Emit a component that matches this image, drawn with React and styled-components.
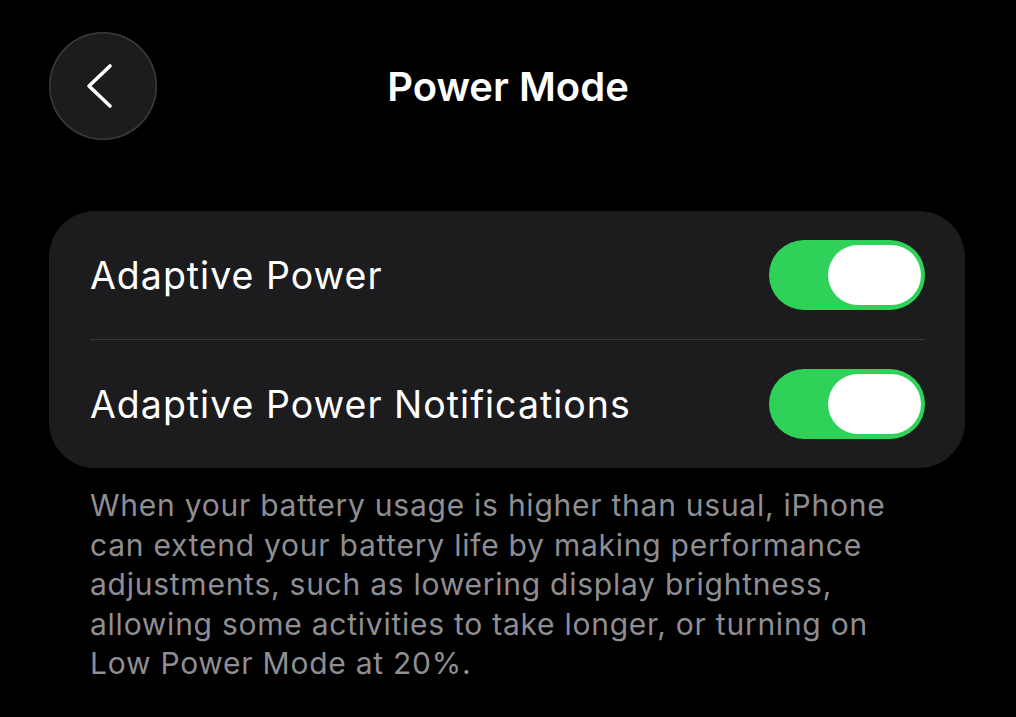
import styled, { createGlobalStyle } from "styled-components";

const Global = createGlobalStyle`
  html, body {
    margin: 0;
    padding: 0;
    background: #000;
  }
  body {
    font-family: Inter, "Noto Sans", sans-serif;
    -webkit-font-smoothing: antialiased;
  }
`;

export default function App() {
  return (
    <Tela>
      <Global />
      <Topo>
        <BotaoVoltar aria-label="Voltar">
          <svg width="30" height="46" viewBox="0 0 30 46" fill="none">
            <path d="M25 3 L4 23 L25 43" stroke="#fff" strokeWidth="3.6" strokeLinecap="round" strokeLinejoin="round" />
          </svg>
        </BotaoVoltar>
        <Titulo>Power Mode</Titulo>
        <Espaco />
      </Topo>

      <Cartao>
        <Linha>
          <Rotulo>Adaptive Power</Rotulo>
          <Chave ligado />
        </Linha>
        <Linha>
          <Rotulo>Adaptive Power Notifications</Rotulo>
          <Chave ligado />
        </Linha>
      </Cartao>

      <Rodape>
        When your battery usage is higher than usual, iPhone<br />
        can extend your battery life by making performance<br />
        adjustments, such as lowering display brightness,<br />
        allowing some activities to take longer, or turning on<br />
        Low Power Mode at 20%.
      </Rodape>
    </Tela>
  );
}

function Chave({ ligado }) {
  return (
    <Trilho $ligado={ligado}>
      <Botao />
    </Trilho>
  );
}

const Tela = styled.div`
  width: 1016px;
  height: 717px;
  background: #000;
  box-sizing: border-box;
  padding: 32px 51px 0 49px;
  overflow: hidden;
`;

const Topo = styled.div`
  display: flex;
  align-items: center;
  justify-content: space-between;
  height: 108px;
`;

const BotaoVoltar = styled.div`
  width: 108px;
  height: 108px;
  border-radius: 50%;
  background: #1c1c1e;
  box-shadow: inset 0 0 0 1.5px #3a3a3c;
  display: flex;
  align-items: center;
  justify-content: center;
  box-sizing: border-box;
  padding-right: 6px;
`;

const Espaco = styled.div`
  width: 108px;
`;

const Titulo = styled.div`
  color: #fff;
  font-size: 40px;
  font-weight: 600;
  letter-spacing: 0px;
  margin-left: 2px;
`;

const Cartao = styled.div`
  margin-top: 71px;
  background: #1c1c1e;
  border-radius: 46px;
  padding: 0 40px 0 41px;
`;

const Linha = styled.div`
  display: flex;
  align-items: center;
  justify-content: space-between;
  height: 128px;
  & + & {
    border-top: 1.5px solid #38383a;
  }
`;

const Rotulo = styled.div`
  color: #fff;
  font-size: 37.5px;
  font-weight: 400;
  letter-spacing: 1px;
`;

const Trilho = styled.div`
  width: 156px;
  height: 70px;
  border-radius: 35px;
  background: ${(p) => (p.$ligado ? "#30d158" : "#39393d")};
  display: flex;
  align-items: center;
  justify-content: ${(p) => (p.$ligado ? "flex-end" : "flex-start")};
  padding: 0 4px;
  box-sizing: border-box;
`;

const Botao = styled.div`
  width: 93px;
  height: 60px;
  border-radius: 30px;
  background: #fff;
`;

const Rodape = styled.div`
  color: #8e8e93;
  font-size: 30px;
  line-height: 39.5px;
  padding: 18px 0 0 41px;
  letter-spacing: 0.75px;
`;
